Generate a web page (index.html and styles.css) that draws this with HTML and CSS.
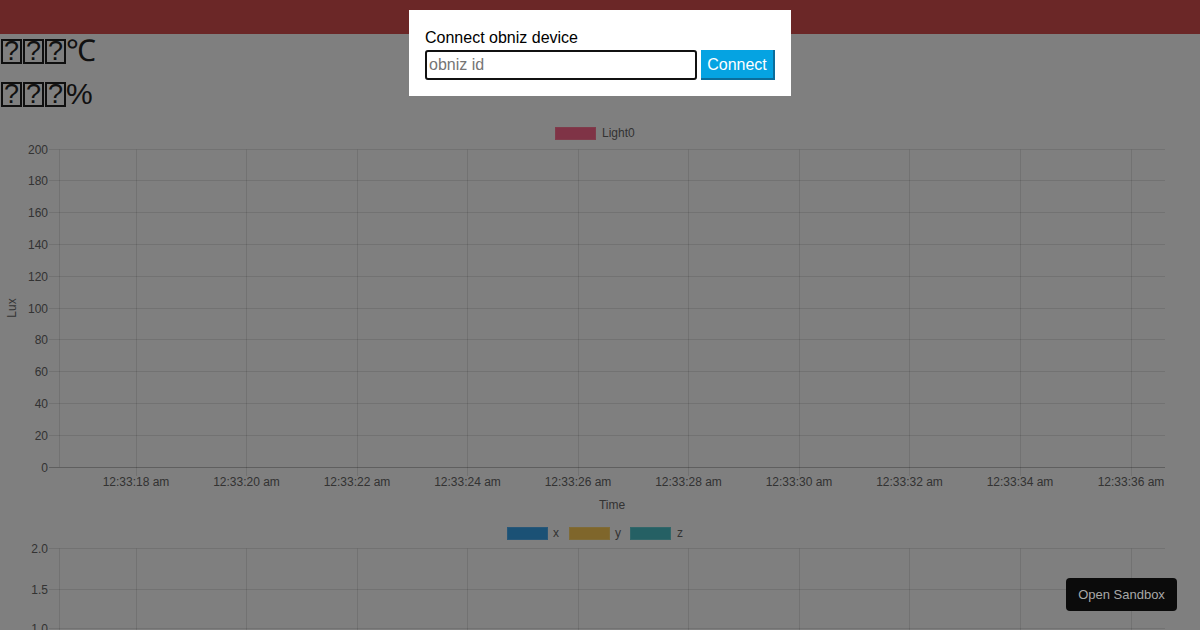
FILE: index.html
```html
<!DOCTYPE html>
<html lang="en">
<head>
  <meta charset="UTF-8" />
  <meta name="viewport" content="width=device-width, initial-scale=1.0" />
  <title>obniz sensor monitor</title>
  <link rel="stylesheet" href="styles.css">
</head>
<body>
  <header class="topbar"></header>

  <div class="readouts">
    <div class="readout"><span class="tofu">?</span><span class="tofu">?</span><span class="tofu">?</span>℃</div>
    <div class="readout"><span class="tofu">?</span><span class="tofu">?</span><span class="tofu">?</span>%</div>
  </div>

  <!-- light sensor chart -->
  <svg class="chart" width="1200" height="400" viewBox="0 0 1200 400">
    <rect class="legend-box" x="555.5" y="12.5" width="40" height="12" fill="rgb(255,102,140)" stroke="rgb(255,120,150)" />
    <text x="602" y="22">Light0</text>

    <g class="grid">
      <line x1="49" y1="34.5" x2="1165" y2="34.5" />
      <line x1="49" y1="65.5" x2="1165" y2="65.5" />
      <line x1="49" y1="97.5" x2="1165" y2="97.5" />
      <line x1="49" y1="129.5" x2="1165" y2="129.5" />
      <line x1="49" y1="161.5" x2="1165" y2="161.5" />
      <line x1="49" y1="193.5" x2="1165" y2="193.5" />
      <line x1="49" y1="224.5" x2="1165" y2="224.5" />
      <line x1="49" y1="256.5" x2="1165" y2="256.5" />
      <line x1="49" y1="288.5" x2="1165" y2="288.5" />
      <line x1="49" y1="320.5" x2="1165" y2="320.5" />

      <line x1="59.5" y1="34.5" x2="59.5" y2="352" />
      <line x1="136.5" y1="34.5" x2="136.5" y2="361" />
      <line x1="246.5" y1="34.5" x2="246.5" y2="361" />
      <line x1="357.5" y1="34.5" x2="357.5" y2="361" />
      <line x1="467.5" y1="34.5" x2="467.5" y2="361" />
      <line x1="578.5" y1="34.5" x2="578.5" y2="361" />
      <line x1="688.5" y1="34.5" x2="688.5" y2="361" />
      <line x1="799.5" y1="34.5" x2="799.5" y2="361" />
      <line x1="909.5" y1="34.5" x2="909.5" y2="361" />
      <line x1="1020.5" y1="34.5" x2="1020.5" y2="361" />
      <line x1="1131.5" y1="34.5" x2="1131.5" y2="361" />
    </g>
    <line class="zero-line" x1="49" y1="352.5" x2="1165" y2="352.5" />

    <g class="y-ticks">
      <text x="48" y="38.5">200</text>
      <text x="48" y="69.5">180</text>
      <text x="48" y="101.5">160</text>
      <text x="48" y="133.5">140</text>
      <text x="48" y="165.5">120</text>
      <text x="48" y="197.5">100</text>
      <text x="48" y="228.5">80</text>
      <text x="48" y="260.5">60</text>
      <text x="48" y="292.5">40</text>
      <text x="48" y="324.5">20</text>
      <text x="48" y="356.5">0</text>
    </g>

    <g class="x-ticks">
      <text x="136" y="371">12:33:18 am</text>
      <text x="246.5" y="371">12:33:20 am</text>
      <text x="357" y="371">12:33:22 am</text>
      <text x="467.5" y="371">12:33:24 am</text>
      <text x="578" y="371">12:33:26 am</text>
      <text x="688.5" y="371">12:33:28 am</text>
      <text x="799" y="371">12:33:30 am</text>
      <text x="909.5" y="371">12:33:32 am</text>
      <text x="1020" y="371">12:33:34 am</text>
      <text x="1131" y="371">12:33:36 am</text>
    </g>

    <text class="axis-title" x="612" y="394">Time</text>
    <text class="axis-title" transform="translate(16 193) rotate(-90)">Lux</text>
  </svg>

  <!-- accelerometer chart -->
  <svg class="chart" width="1200" height="200" viewBox="0 0 1200 200">
    <rect class="legend-box" x="507.5" y="12.5" width="40" height="12" fill="rgb(54,162,235)" stroke="rgb(80,175,240)" />
    <text x="553" y="22">x</text>
    <rect class="legend-box" x="569.5" y="12.5" width="40" height="12" fill="rgb(255,205,86)" stroke="rgb(255,215,110)" />
    <text x="615" y="22">y</text>
    <rect class="legend-box" x="630.5" y="12.5" width="40" height="12" fill="rgb(75,192,200)" stroke="rgb(100,205,210)" />
    <text x="677" y="22">z</text>

    <g class="grid">
      <line x1="49" y1="33.5" x2="1165" y2="33.5" />
      <line x1="49" y1="74.5" x2="1165" y2="74.5" />
      <line x1="49" y1="113.5" x2="1165" y2="113.5" />

      <line x1="59.5" y1="33.5" x2="59.5" y2="200" />
      <line x1="136.5" y1="33.5" x2="136.5" y2="200" />
      <line x1="246.5" y1="33.5" x2="246.5" y2="200" />
      <line x1="357.5" y1="33.5" x2="357.5" y2="200" />
      <line x1="467.5" y1="33.5" x2="467.5" y2="200" />
      <line x1="578.5" y1="33.5" x2="578.5" y2="200" />
      <line x1="688.5" y1="33.5" x2="688.5" y2="200" />
      <line x1="799.5" y1="33.5" x2="799.5" y2="200" />
      <line x1="909.5" y1="33.5" x2="909.5" y2="200" />
      <line x1="1020.5" y1="33.5" x2="1020.5" y2="200" />
      <line x1="1131.5" y1="33.5" x2="1131.5" y2="200" />
    </g>

    <g class="y-ticks">
      <text x="48" y="37.5">2.0</text>
      <text x="48" y="78.5">1.5</text>
      <text x="48" y="117.5">1.0</text>
    </g>
  </svg>

  <div class="backdrop">
    <div class="modal">
      <p class="modal-title">Connect obniz device</p>
      <div class="modal-row">
        <input type="text" placeholder="obniz id" />
        <button>Connect</button>
      </div>
    </div>
  </div>

  <a class="sandbox-btn" href="#">Open Sandbox</a>
</body>
</html>
```

FILE: styles.css
```css
html, body {
  margin: 0;
  padding: 0;
  overflow: hidden;
}
body {
  background: #fff;
  color: #222;
  font-family: "Liberation Sans", Arial, sans-serif;
}
.topbar {
  height: 34px;
  background: #d64e4e;
}
.readouts {
  padding-bottom: 4px;
}
.readout {
  height: 34px;
  font-size: 30px;
  line-height: 34px;
  white-space: nowrap;
}
.readout + .readout {
  margin-top: 9px;
}
.tofu {
  display: inline-block;
  box-sizing: border-box;
  width: 21px;
  height: 25px;
  margin-left: 1px;
  border: 2px solid #1e1e1e;
  font-family: "Liberation Sans", Arial, sans-serif;
  font-size: 27px;
  line-height: 21px;
  text-align: center;
  vertical-align: 1px;
}
.chart {
  display: block;
}
.chart text {
  font-family: "Liberation Sans", Arial, sans-serif;
  font-size: 12px;
  fill: #666;
}
.grid line {
  stroke: rgba(0, 0, 0, 0.1);
  stroke-width: 1;
}
.zero-line {
  stroke: rgba(0, 0, 0, 0.25);
  stroke-width: 1;
}
.y-ticks text {
  text-anchor: end;
}
.x-ticks text,
.chart .axis-title {
  text-anchor: middle;
}
.backdrop {
  position: fixed;
  top: 0;
  left: 0;
  right: 0;
  bottom: 0;
  background: rgba(0, 0, 0, 0.5);
  display: flex;
  justify-content: center;
  align-items: flex-start;
}
.modal {
  margin-top: 10px;
  width: 382px;
  box-sizing: border-box;
  padding: 16px;
  background: #fff;
}
.modal-title {
  margin: 0;
  font-size: 16px;
  line-height: 24px;
  color: #000;
}
.modal-row {
  display: flex;
  gap: 4px;
}
.modal-row input {
  width: 272px;
  height: 30px;
  box-sizing: border-box;
  padding: 0 2px;
  border: 2px solid #111;
  border-radius: 3px;
  outline: none;
  font-family: "Liberation Sans", Arial, sans-serif;
  font-size: 16px;
  color: #000;
}
.modal-row input::placeholder {
  color: #757575;
}
.modal-row button {
  width: 74px;
  height: 30px;
  box-sizing: border-box;
  padding: 2px 0 0;
  border: 0;
  border-right: 2px solid #0a6d9c;
  border-bottom: 2px solid #0a6d9c;
  background: #05a3e2;
  color: #fff;
  font-family: "Liberation Sans", Arial, sans-serif;
  font-size: 16px;
  cursor: pointer;
}
.sandbox-btn {
  position: fixed;
  right: 23px;
  bottom: 19px;
  width: 111px;
  height: 33px;
  box-sizing: border-box;
  display: flex;
  align-items: center;
  justify-content: center;
  background: #0b0b0b;
  border-radius: 4px;
  color: #a8a8a8;
  font-size: 13px;
  text-decoration: none;
}
```
